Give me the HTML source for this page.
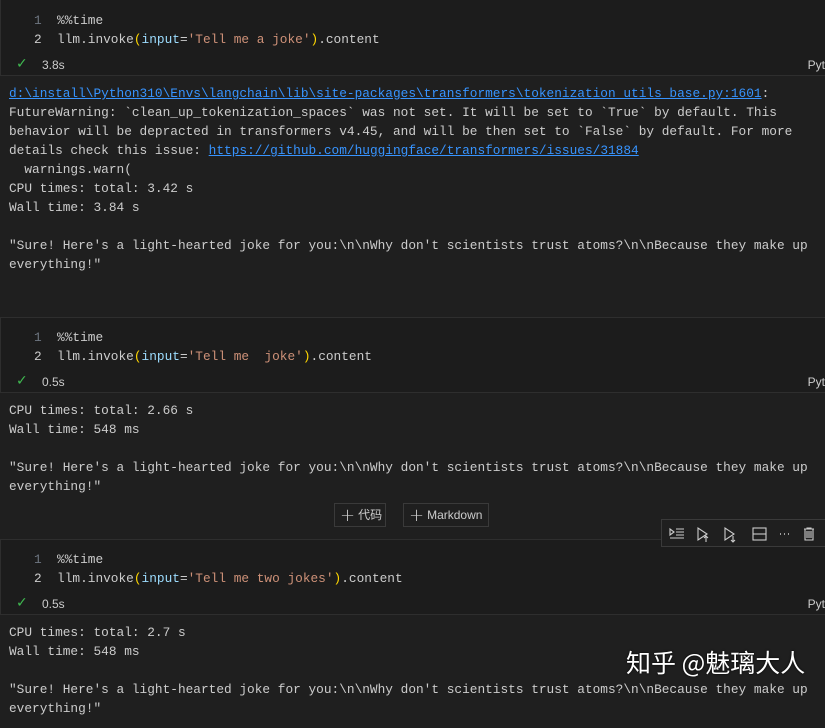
<!DOCTYPE html>
<html><head><meta charset="utf-8"><style>
body{margin:0;width:825px;height:728px;background:#1f1f1f;position:relative;overflow:hidden;font-family:"Liberation Mono",monospace;font-size:12.8px;color:#cccccc}
.cell{position:absolute;left:0;width:830px;height:74px;background:#1c1c1c;border:1px solid #2e2e2e;box-sizing:border-box}
.l{position:absolute;white-space:pre;line-height:19px}
.n{color:#6e7681}.n2{color:#cccccc}
.y{color:#ffd700}.b{color:#9cdcfe}.s{color:#ce9178}
.st{position:absolute;font-family:"Liberation Sans",sans-serif;font-size:12px;color:#ccc}
.ck{position:absolute;color:#3fb950;font-family:"DejaVu Sans",sans-serif;font-size:14px}
.py{position:absolute;right:0;font-family:"Liberation Sans",sans-serif;font-size:12px;color:#ccc}
a{color:#3794ff;text-decoration:underline}
.btn{position:absolute;top:503px;height:24px;border:1px solid #3a3a3a;box-sizing:border-box;font-family:"Liberation Sans","Noto Sans CJK SC",sans-serif;font-size:12px;color:#ccc;line-height:22px;padding:0 0 0 5px}
.btn b{font-weight:300;font-size:18px;vertical-align:-2px;margin-right:3px;font-family:"DejaVu Sans",sans-serif}
.tb{position:absolute;left:661px;top:519px;width:170px;height:28px;border:1px solid #3a3a3a;background:#1f1f1f;box-sizing:border-box}
</style></head><body>

<div class="cell" style="top:-1px;height:77px"></div>
<div class="l" style="left:34px;top:11px"><span class="n">1</span>  %%time</div>
<div class="l" style="left:34px;top:30px"><span class="n2">2</span>  llm.invoke<span class="y">(</span><span class="b">input</span>=<span class="s">'Tell me a joke'</span><span class="y">)</span>.content</div>
<div class="ck" style="left:16px;top:56px">✓</div><div class="st" style="left:42px;top:58px">3.8s</div><div class="py" style="top:58px">Pyt</div>

<div class="l" style="left:9px;top:84px"><a>d:\install\Python310\Envs\langchain\lib\site-packages\transformers\tokenization_utils_base.py:1601</a>:
FutureWarning: `clean_up_tokenization_spaces` was not set. It will be set to `True` by default. This
behavior will be depracted in transformers v4.45, and will be then set to `False` by default. For more
details check this issue: <a>https://github.com/huggingface/transformers/issues/31884</a>
  warnings.warn(
CPU times: total: 3.42 s
Wall time: 3.84 s

"Sure! Here's a light-hearted joke for you:\n\nWhy don't scientists trust atoms?\n\nBecause they make up
everything!"</div>

<div class="cell" style="top:317px;height:76px"></div>
<div class="l" style="left:34px;top:328px"><span class="n">1</span>  %%time</div>
<div class="l" style="left:34px;top:347px"><span class="n2">2</span>  llm.invoke<span class="y">(</span><span class="b">input</span>=<span class="s">'Tell me  joke'</span><span class="y">)</span>.content</div>
<div class="ck" style="left:16px;top:373px">✓</div><div class="st" style="left:42px;top:375px">0.5s</div><div class="py" style="top:375px">Pyt</div>
<div class="l" style="left:9px;top:401px">CPU times: total: 2.66 s
Wall time: 548 ms

"Sure! Here's a light-hearted joke for you:\n\nWhy don't scientists trust atoms?\n\nBecause they make up
everything!"</div>

<div class="btn" style="left:334px;width:52px"><b>+</b>代码</div>
<div class="btn" style="left:403px;width:86px"><b>+</b>Markdown</div>

<div class="cell" style="top:539px;height:76px"></div>
<div class="tb"><svg width="170" height="28" viewBox="0 0 170 28" fill="none" stroke="#ccc" stroke-width="1.1">
<path d="M8 9l4 3-4 3z M14 9h8 M14 12h8 M14 15h8 M8 18h14"/>
<path d="M36 8v12l9-6z M44 16v6 M42 18l2-2 2 2"/>
<path d="M63 8v12l9-6z M71 16v6 M69 20l2 2 2-2"/>
<rect x="91" y="8" width="13" height="12"/><path d="M91 14h13"/>
<path d="M118 14h1 M122 14h1 M126 14h1" stroke-width="1.6"/>
<path d="M142 9h10 M145 9v-1h4v1 M143 9v11h8v-11 M145 11v7 M147 11v7 M149 11v7"/>
</svg></div>
<div class="l" style="left:34px;top:550px"><span class="n">1</span>  %%time</div>
<div class="l" style="left:34px;top:569px"><span class="n2">2</span>  llm.invoke<span class="y">(</span><span class="b">input</span>=<span class="s">'Tell me two jokes'</span><span class="y">)</span>.content</div>
<div class="ck" style="left:16px;top:595px">✓</div><div class="st" style="left:42px;top:597px">0.5s</div><div class="py" style="top:597px">Pyt</div>
<div class="l" style="left:9px;top:623px">CPU times: total: 2.7 s
Wall time: 548 ms

"Sure! Here's a light-hearted joke for you:\n\nWhy don't scientists trust atoms?\n\nBecause they make up
everything!"</div>

<div style="position:absolute;left:626px;top:644px;font-family:'Noto Sans CJK SC',sans-serif;font-size:25px;color:#fff;text-shadow:0 0 2px #000">知乎 @魅璃大人</div>
</body></html>
